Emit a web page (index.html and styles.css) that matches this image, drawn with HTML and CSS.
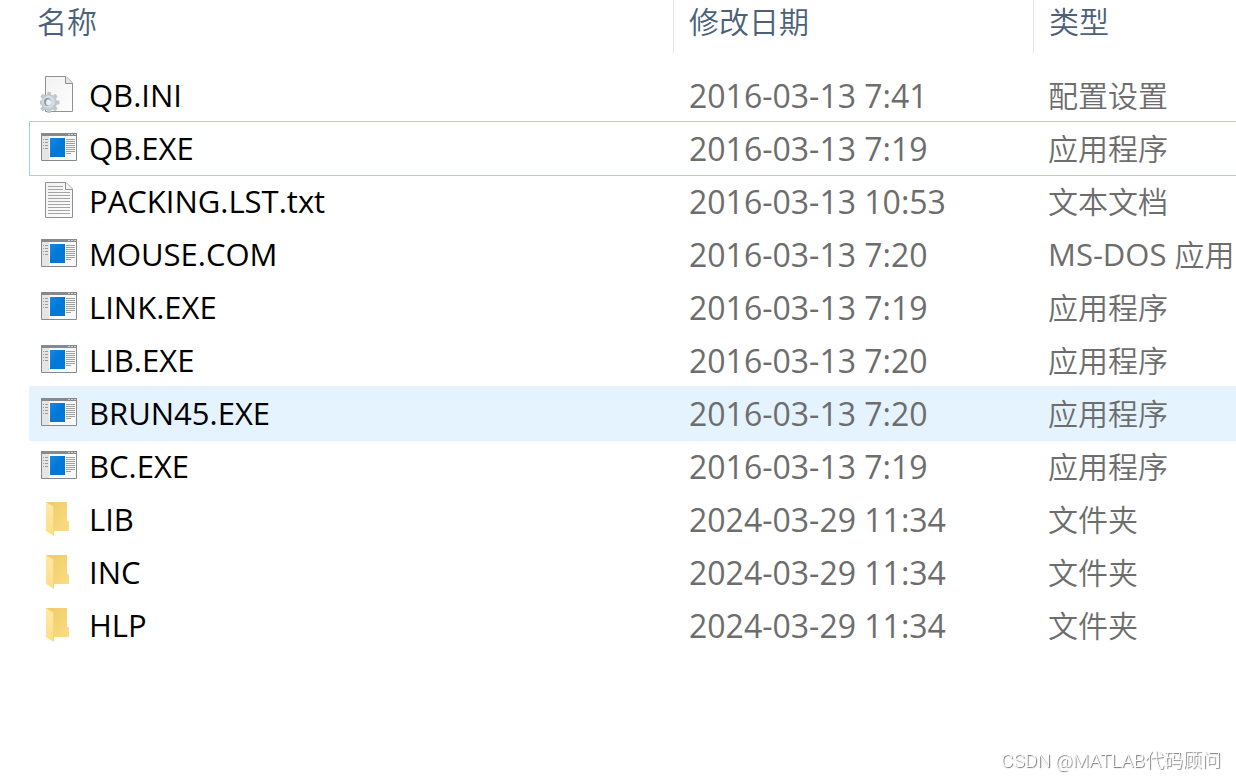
FILE: index.html
```
<!DOCTYPE html>
<html lang="zh-CN">

<head>
    <meta charset="UTF-8">
    <meta name="viewport" content="width=device-width, initial-scale=1">
    <title>文件列表</title>
    <link rel="stylesheet" href="styles.css">
</head>

<body>

    <!-- shared icons -->
    <svg class="sprite" width="0" height="0" aria-hidden="true">
        <defs>
            <linearGradient id="paper" x1="0" y1="0" x2="1" y2="1">
                <stop offset="0" stop-color="#f2f2f2" />
                <stop offset="1" stop-color="#fdfdfd" />
            </linearGradient>
            <linearGradient id="blue" x1="0" y1="0" x2="1" y2="1">
                <stop offset="0" stop-color="#1a88e0" />
                <stop offset="0.5" stop-color="#0078d7" />
            </linearGradient>
            <linearGradient id="folder-back" x1="0" y1="0" x2="1" y2="1">
                <stop offset="0" stop-color="#eecb66" />
                <stop offset="1" stop-color="#fbdc82" />
            </linearGradient>
            <linearGradient id="folder-front" x1="0" y1="0" x2="0" y2="1">
                <stop offset="0" stop-color="#ffeaa8" />
                <stop offset="1" stop-color="#fddd84" />
            </linearGradient>
        </defs>
        <symbol id="icon-ini" viewBox="0 0 38 39">
            <path d="M5.5 .5H26L32.5 7V35.5H5.5Z" fill="url(#paper)" stroke="#8f9193" />
            <path d="M25.5 .5V7.5H32.5" fill="#e4e4e4" stroke="#8f9193" />
            <g fill="#bec8cf">
                <rect x="7" y="16" width="4" height="21" rx="1" />
                <rect x="7" y="16" width="4" height="21" rx="1" transform="rotate(45 9 26.5)" />
                <rect x="7" y="16" width="4" height="21" rx="1" transform="rotate(90 9 26.5)" />
                <rect x="7" y="16" width="4" height="21" rx="1" transform="rotate(135 9 26.5)" />
                <circle cx="9" cy="26.5" r="8" />
            </g>
            <circle cx="8.5" cy="26" r="6.5" fill="#d3dce2" />
            <ellipse cx="7.5" cy="26" rx="3.5" ry="4" fill="#929ba2" />
            <ellipse cx="8.5" cy="26.5" rx="2.5" ry="3" fill="#edf0f2" />
        </symbol>
        <symbol id="icon-text" viewBox="0 0 38 39">
            <path d="M5.5 .5H26L32.5 7V35.5H5.5Z" fill="url(#paper)" stroke="#8f9193" />
            <path d="M25.5 .5V7.5H32.5" fill="#f4f4f4" stroke="#8f9193" />
            <path d="M8 4.5H23M8 7.5H23M8 10.5H30M8 13.5H30M8 16.5H30M8 19.5H30M8 22.5H30M8 25.5H30M8 28.5H30M8 31.5H30" stroke="#a4a4a4" />
        </symbol>
        <symbol id="icon-app" viewBox="0 0 38 39">
            <path d="M1.5 4.5H36.5V31.5H1.5Z" fill="#f9f9f9" stroke="#868a8e" />
            <path d="M2 7H9V31H2Z" fill="#e5e5e5" />
            <path d="M1 4H37V7H1Z" fill="#868a8e" />
            <path d="M28 5.5H30M31 5.5H33M34 5.5H36" stroke="#d0d2d4" />
            <path d="M3 10.5H4M3 13.5H4M3 16.5H4M3 19.5H4M5 10.5H8M5 13.5H8M5 16.5H8M5 19.5H8" stroke="#9b9b9b" />
            <path d="M10 9H25V28H10Z" fill="url(#blue)" />
            <path d="M26 10.5H35M26 12.5H35M26 14.5H35M26 16.5H35M26 18.5H35M26 20.5H35M26 22.5H35M26 24.5H31" stroke="#a0a0a0" />
        </symbol>
        <symbol id="icon-folder" viewBox="0 0 38 39">
            <path d="M6 2H27V20L29 22V31H13Z" fill="url(#folder-back)" />
            <path d="M6 2L14 7V36L6 31Z" fill="url(#folder-front)" />
            <path d="M13.5 7V35" stroke="#f4d580" />
        </symbol>
    </svg>

    <main class="explorer">
        <table class="files">
            <colgroup>
                <col class="col_name">
                <col class="col_date">
                <col>
            </colgroup>
            <thead>
                <tr>
                    <th scope="col"><div class="heading">名称</div></th>
                    <th scope="col"><div class="heading">修改日期</div></th>
                    <th scope="col"><div class="heading">类型</div></th>
                </tr>
            </thead>
            <tbody>
                <tr>
                    <td><div class="file"><svg class="icon"><use href="#icon-ini" /></svg>QB.INI</div></td>
                    <td>2016-03-13 7:41</td>
                    <td class="type">配置设置</td>
                </tr>
                <tr class="focused">
                    <td><div class="file"><svg class="icon"><use href="#icon-app" /></svg>QB.EXE</div></td>
                    <td>2016-03-13 7:19</td>
                    <td class="type">应用程序</td>
                </tr>
                <tr>
                    <td><div class="file"><svg class="icon"><use href="#icon-text" /></svg>PACKING.LST.txt</div></td>
                    <td>2016-03-13 10:53</td>
                    <td class="type">文本文档</td>
                </tr>
                <tr>
                    <td><div class="file"><svg class="icon"><use href="#icon-app" /></svg>MOUSE.COM</div></td>
                    <td>2016-03-13 7:20</td>
                    <td class="type"><span class="latin">MS-DOS </span>应用</td>
                </tr>
                <tr>
                    <td><div class="file"><svg class="icon"><use href="#icon-app" /></svg>LINK.EXE</div></td>
                    <td>2016-03-13 7:19</td>
                    <td class="type">应用程序</td>
                </tr>
                <tr>
                    <td><div class="file"><svg class="icon"><use href="#icon-app" /></svg>LIB.EXE</div></td>
                    <td>2016-03-13 7:20</td>
                    <td class="type">应用程序</td>
                </tr>
                <tr class="hovered">
                    <td><div class="file"><svg class="icon"><use href="#icon-app" /></svg>BRUN45.EXE</div></td>
                    <td>2016-03-13 7:20</td>
                    <td class="type">应用程序</td>
                </tr>
                <tr>
                    <td><div class="file"><svg class="icon"><use href="#icon-app" /></svg>BC.EXE</div></td>
                    <td>2016-03-13 7:19</td>
                    <td class="type">应用程序</td>
                </tr>
                <tr>
                    <td><div class="file"><svg class="icon"><use href="#icon-folder" /></svg>LIB</div></td>
                    <td>2024-03-29 11:34</td>
                    <td class="type">文件夹</td>
                </tr>
                <tr>
                    <td><div class="file"><svg class="icon"><use href="#icon-folder" /></svg>INC</div></td>
                    <td>2024-03-29 11:34</td>
                    <td class="type">文件夹</td>
                </tr>
                <tr>
                    <td><div class="file"><svg class="icon"><use href="#icon-folder" /></svg>HLP</div></td>
                    <td>2024-03-29 11:34</td>
                    <td class="type">文件夹</td>
                </tr>
            </tbody>
        </table>
    </main>

    <div class="watermark">CSDN @MATLAB代码顾问</div>

</body>

</html>
```
FILE: styles.css
```
body {
    margin: 0;
    background: #ffffff;
    color: #6d6d6d;
    font-family: "Open Sans", "Noto Sans CJK SC", sans-serif;
    font-size: 32px;
}

.sprite {
    position: absolute;
}

.explorer {
    min-height: 100vh;
    box-sizing: border-box;
    padding-left: 30px;
    overflow: hidden;
}

.files {
    width: 100%;
    table-layout: fixed;
    border-collapse: collapse;
    white-space: nowrap;
}

.col_name {
    width: 643px;
}

.col_date {
    width: 360px;
}

th {
    height: 69px;
    padding: 0;
    vertical-align: top;
    text-align: left;
    font-size: 30px;
    font-weight: 350;
    color: #4c607a;
}

.heading {
    height: 53px;
    line-height: 44px;
    padding-left: 15px;
    border-left: 1px solid #e5e5e5;
}

th:first-child .heading {
    padding-left: 7px;
    border-left: none;
}

td {
    height: 53px;
    padding: 0 0 0 16px;
    line-height: 52px;
}

td:first-child {
    padding-left: 10px;
}

.type {
    padding-left: 15px;
    font-size: 30px;
    font-weight: 350;
}

.latin {
    font-size: 31px;
    font-weight: 400;
}

.file {
    display: flex;
    align-items: center;
    gap: 11px;
    font-size: 31px;
    line-height: 51px;
    color: #000000;
}

.icon {
    width: 38px;
    height: 39px;
    flex: none;
}

.focused {
    outline: 1px solid #99d1ff;
}

.hovered {
    background: #e5f3ff;
    outline: 1px solid #e5f3ff;
}

.watermark {
    position: fixed;
    right: 15px;
    bottom: 6px;
    font-family: Roboto, "Noto Sans CJK SC", sans-serif;
    font-size: 19px;
    line-height: 26px;
    font-weight: 300;
    color: #ffffff;
    text-shadow: 1px 1px 1px #707070;
}
```
